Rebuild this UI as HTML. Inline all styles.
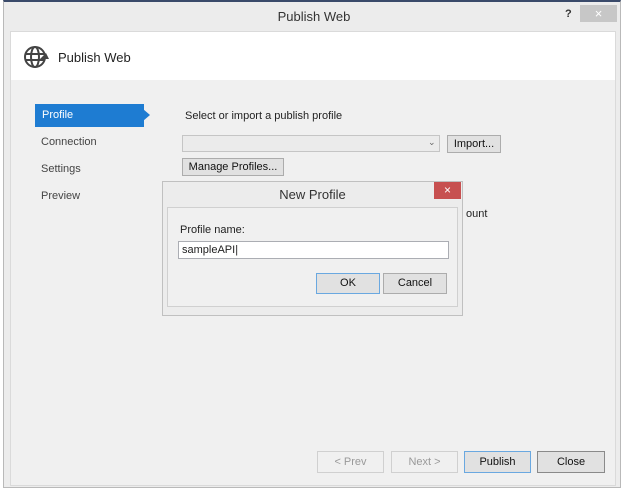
<!DOCTYPE html><html><head><style>
*{box-sizing:border-box;margin:0;padding:0}
body{width:628px;height:491px;background:#fff;position:relative;overflow:hidden;font-family:"Liberation Sans",sans-serif;font-size:11px;color:#222}
.a{position:absolute}
.btn{position:absolute;border:1px solid #acacac;background:#e1e1e1;text-align:center;font-size:11px;color:#111}
</style></head><body>
<div class="a" style="left:0;top:0;width:628px;height:491px;background:#fff"></div>
<div class="a" style="left:3px;top:0;width:618px;height:488px;background:#ececec;border:1px solid #b9b9b9;border-top:2px solid #3a4a6a"></div>
<div class="a" style="left:10px;top:31px;width:606px;height:455px;background:#f0f0f0;border:1px solid #dadada"></div>
<div class="a" style="left:0;top:9px;width:628px;text-align:center;font-size:13px;color:#333">Publish Web</div>
<div class="a" style="left:565px;top:8px;font-size:11px;font-weight:bold;color:#333">?</div>
<div class="a" style="left:580px;top:5px;width:37px;height:17px;background:#c7c7c7;color:#fff;text-align:center;font-size:13px;line-height:17px">×</div>
<div class="a" style="left:11px;top:32px;width:604px;height:48px;background:#fff"></div>
<svg class="a" style="left:23px;top:45px" width="26" height="24" viewBox="0 0 26 24"><g fill="none" stroke="#444" stroke-width="2"><circle cx="12" cy="12" r="10"/><ellipse cx="12" cy="12" rx="4" ry="10"/><line x1="2" y1="9" x2="22" y2="9"/><line x1="2" y1="15" x2="22" y2="15"/></g><path d="M17 14 L23 8 L26 14 Z" fill="#444"/></svg>
<div class="a" style="left:58px;top:50px;font-size:13px;color:#222">Publish Web</div>
<div class="a" style="left:35px;top:104px;width:109px;height:23px;background:#1e7cd2"></div>
<div class="a" style="left:143px;top:109px;width:0;height:0;border-top:6px solid transparent;border-bottom:6px solid transparent;border-left:7px solid #1e7cd2"></div>
<div class="a" style="left:42px;top:109px;color:#fff">Profile</div>
<div class="a" style="left:41px;top:136px;color:#444">Connection</div>
<div class="a" style="left:41px;top:163px;color:#444">Settings</div>
<div class="a" style="left:41px;top:190px;color:#444">Preview</div>
<div class="a" style="left:185px;top:110px;color:#222">Select or import a publish profile</div>
<div class="a" style="left:182px;top:135px;width:258px;height:17px;border:1px solid #c5c5c5;background:#ebebeb"></div>
<div class="a" style="left:428px;top:137px;font-size:9px;color:#666">⌄</div>
<div class="btn" style="left:447px;top:135px;width:54px;height:18px;line-height:16px">Import...</div>
<div class="btn" style="left:182px;top:158px;width:102px;height:18px;line-height:16px">Manage Profiles...</div>
<div class="a" style="left:466px;top:208px;color:#222">ount</div>
<div class="a" style="left:162px;top:181px;width:301px;height:135px;background:#ececec;border:1px solid #c0c0c0"></div>
<div class="a" style="left:162px;top:187px;width:301px;text-align:center;font-size:13px;color:#333">New Profile</div>
<div class="a" style="left:434px;top:182px;width:27px;height:17px;background:#c75050;color:#fff;text-align:center;font-size:12px;line-height:17px">×</div>
<div class="a" style="left:167px;top:207px;width:291px;height:100px;background:#f0f0f0;border:1px solid #d0d0d0"></div>
<div class="a" style="left:180px;top:224px">Profile name:</div>
<div class="a" style="left:178px;top:241px;width:271px;height:18px;background:#fff;border:1px solid #abadb3;padding:2px 3px;line-height:12px">sampleAPI|</div>
<div class="btn" style="left:316px;top:273px;width:64px;height:21px;line-height:19px;border-color:#6aa8e0">OK</div>
<div class="btn" style="left:383px;top:273px;width:64px;height:21px;line-height:19px">Cancel</div>
<div class="btn" style="left:317px;top:451px;width:67px;height:22px;line-height:20px;background:#f0f0f0;border-color:#d0d0d0;color:#999">&lt; Prev</div>
<div class="btn" style="left:391px;top:451px;width:67px;height:22px;line-height:20px;background:#f0f0f0;border-color:#d0d0d0;color:#999">Next &gt;</div>
<div class="btn" style="left:464px;top:451px;width:67px;height:22px;line-height:20px;border-color:#6aa8e0">Publish</div>
<div class="btn" style="left:537px;top:451px;width:68px;height:22px;line-height:20px;border-color:#8a8a8a">Close</div>
</body></html>
